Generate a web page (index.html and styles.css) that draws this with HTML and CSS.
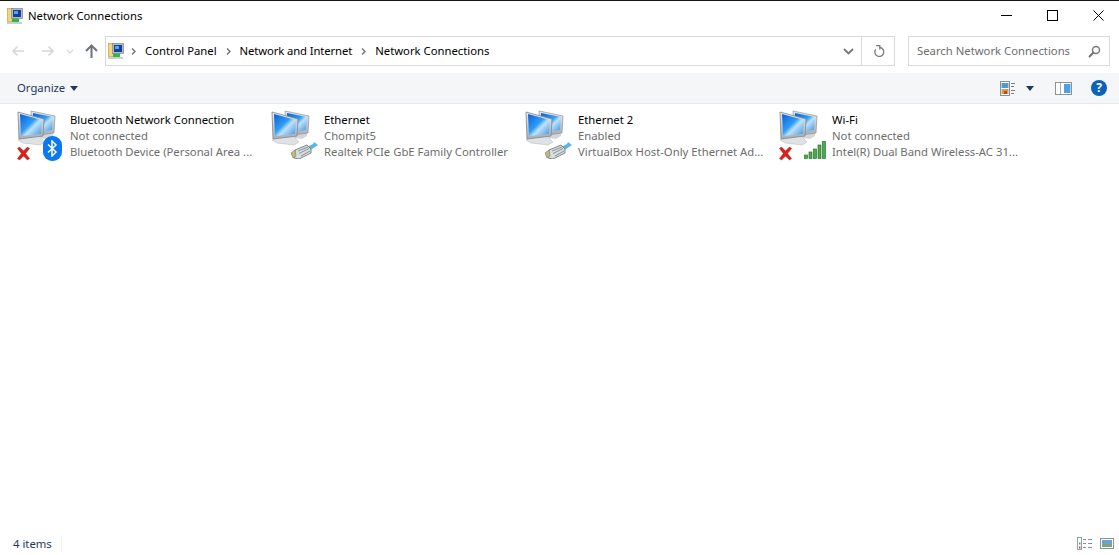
FILE: index.html
```html
<!DOCTYPE html>
<html lang="en">
<head>
<meta charset="utf-8">
<title>Network Connections</title>
<link rel="stylesheet" href="styles.css">
</head>
<body>
<svg class="defs" width="0" height="0" aria-hidden="true">
  <defs>
    <linearGradient id="scr" x1="0" y1="0" x2="1" y2="1">
      <stop offset="0" stop-color="#0b5fd8"/><stop offset=".45" stop-color="#2f9cf5"/><stop offset=".6" stop-color="#bfe2fb"/><stop offset="1" stop-color="#3a8fe0"/>
    </linearGradient>
    <linearGradient id="frm" x1="0" y1="0" x2="0" y2="1">
      <stop offset="0" stop-color="#e8eaec"/><stop offset="1" stop-color="#a9aeb3"/>
    </linearGradient>
    <symbol id="pc" viewBox="0 0 50 44">
      <path d="M34 25l9 1 0 4-5 3-9-1z" fill="#d3d6d9"/>
      <path d="M21 5l24 5-1 17-15 2-7-2z" fill="url(#frm)" stroke="#8d9398" stroke-width=".7"/>
      <path d="M23 7l20 4-1 13-13 2-6-2z" fill="url(#scr)"/>
      <path d="M11 27l19-2 1 7 4 4-5 3-17-2-5-3 5-3z" fill="#dfe2e4" stroke="#b3b7bb" stroke-width=".5"/>
      <path d="M8 6l26 7-1 17-24 3z" fill="url(#frm)" stroke="#7e858b" stroke-width=".8"/>
      <path d="M10 8l22 6-1 14-20 2z" fill="url(#scr)"/>
    </symbol>
    <symbol id="x" viewBox="0 0 15 15">
      <path d="M1.500 2.500L3.500 1l4 4 4-4 2 1.500-4 5 4 5-2 1.500-4-4-4 4-2-1.500 4-5z" fill="#d9211c" stroke="#a81612" stroke-width=".5"/>
    </symbol>
    <symbol id="small" viewBox="0 0 16 16">
      <rect x=".4" y=".4" width="6" height="13" fill="#f3d67c" stroke="#c4a44d" stroke-width=".7"/>
      <rect x="4.500" y=".5" width="11" height="10" fill="#b6bcc2" stroke="#80878d" stroke-width=".7"/>
      <rect x="6" y="2" width="8" height="7" fill="#12409c"/>
      <rect x="7" y="3" width="4" height="3" fill="#5ba2e8"/>
      <rect x="5" y="10.500" width="7" height="3.500" fill="#35b24b"/>
      <rect x="0" y="14" width="15" height="2" fill="#c9cdd0"/>
    </symbol>
    <symbol id="plug" viewBox="0 0 27 17">
      <path d="M16 5l6-3 1-2 4 3-3 2-6 4z" fill="#57b7ea"/>
      <path d="M4 8l12-5 4 4v4L8 17l-5-1z" fill="#d9dde0" stroke="#71787d" stroke-width=".9"/>
      <path d="M7 9l10-4M8 11.500l10-5M10 14l9-5" stroke="#8b9296" stroke-width="1" fill="none"/>
      <path d="M0 11l4-3 1 6-3 2z" fill="#c8b878" stroke="#71787d" stroke-width=".6"/>
    </symbol>
  </defs>
</svg>

<div class="topline"></div>

<header class="titlebar">
  <div class="title">
    <svg class="ico16"><use href="#small"/></svg>
    <span>Network Connections</span>
  </div>
  <div class="winctl">
    <span class="wbtn"><svg width="11" height="11"><path d="M0 5.500h11" stroke="#000"/></svg></span>
    <span class="wbtn"><svg width="11" height="11"><rect x=".5" y=".5" width="10" height="10" fill="none" stroke="#000"/></svg></span>
    <span class="wbtn"><svg width="11" height="11"><path d="M.5 .5l10 10M10.500 .5l-10 10" stroke="#000" fill="none"/></svg></span>
  </div>
</header>

<nav class="navrow">
  <div class="navbtns">
    <svg class="back" width="14" height="12"><path d="M13 6H2M6.500 1.500L2 6l4.500 4.500" fill="none" stroke="#d4d6d8" stroke-width="1.500"/></svg>
    <svg class="fwd" width="14" height="12"><path d="M1 6h11M7.500 1.500L12 6l-4.500 4.500" fill="none" stroke="#d4d6d8" stroke-width="1.500"/></svg>
    <svg class="drop" width="8" height="5"><path d="M1 1l3 3 3-3" fill="none" stroke="#d4d6d8" stroke-width="1.200"/></svg>
    <svg class="up" width="13" height="14"><path d="M6.500 14V2M1 7l5.500-5.500L12 7" fill="none" stroke="#6f7478" stroke-width="2"/></svg>
  </div>
  <div class="address">
    <svg class="ico16 addr-ico"><use href="#small"/></svg>
    <div class="crumbs">
      <svg class="chev" width="5" height="7"><path d="M1 .5L4 3.500 1 6.500" fill="none" stroke="#6d6d6d" stroke-width="1.300"/></svg>
      <span>Control Panel</span>
      <svg class="chev" width="5" height="7"><path d="M1 .5L4 3.500 1 6.500" fill="none" stroke="#6d6d6d" stroke-width="1.300"/></svg>
      <span class="tight">Network and Internet</span>
      <svg class="chev" width="5" height="7"><path d="M1 .5L4 3.500 1 6.500" fill="none" stroke="#6d6d6d" stroke-width="1.300"/></svg>
      <span>Network Connections</span>
    </div>
    <span class="addr-drop"><svg width="11" height="7"><path d="M1 1l4.500 4.500L10 1" fill="none" stroke="#74787c" stroke-width="1.800"/></svg></span>
    <span class="addr-refresh"><svg width="12" height="13" viewBox="0 0 12 13"><path d="M7 2.500A4.500 4.500 0 1 1 2.600 4.400" fill="none" stroke="#777b7f" stroke-width="1.300"/><path d="M3 .5h3.800v4" fill="none" stroke="#777b7f" stroke-width="1.300"/></svg></span>
  </div>
  <div class="search">
    <span>Search Network Connections</span>
    <svg width="13" height="13" viewBox="0 0 13 13"><circle cx="8" cy="5" r="3.500" fill="none" stroke="#7a7a7a" stroke-width="1.500"/><path d="M5.500 7.500L1 12" stroke="#6f6f6f" stroke-width="2"/></svg>
  </div>
</nav>

<div class="toolbar">
  <span class="organize">Organize<i class="caret"></i></span>
  <div class="tools">
    <svg class="viewicon" width="15" height="15" viewBox="0 0 15 15"><rect x=".5" y=".5" width="9" height="14" fill="#fff" stroke="#8b8f93"/><rect x="1.500" y="2" width="7" height="5" fill="#4e9bd4"/><rect x="1.500" y="8" width="7" height="5" fill="#c9a43e"/><rect x="4" y="10" width="3" height="3" fill="#c8402f"/><path d="M11 2.500h4M11 5.500h3M11 9.500h4M11 12.500h3" stroke="#7d8185"/></svg>
    <i class="caret tool-caret"></i>
    <svg class="pane" width="17" height="13"><rect x=".5" y=".5" width="16" height="12" fill="#fff" stroke="#8d9195"/><rect x="9" y="2" width="6.500" height="9" fill="#4e9fe3"/><path d="M5.500 1v11" stroke="#a9adb1"/></svg>
    <span class="help">?</span>
  </div>
</div>

<main class="items">
  <article class="item">
    <div class="iconbox">
      <svg class="pc"><use href="#pc"/></svg>
      <svg class="badge-x"><use href="#x"/></svg>
      <span class="badge-bt"><svg width="11" height="17" viewBox="0 0 11 17"><path d="M1 4.500l8 7.500-4 4V1l4 4-8 7.500" fill="none" stroke="#fff" stroke-width="1.500"/></svg></span>
    </div>
    <div class="text">
      <div class="name">Bluetooth Network Connection</div>
      <div class="sub">Not connected</div>
      <div class="sub">Bluetooth Device (Personal Area ...</div>
    </div>
  </article>
  <article class="item">
    <div class="iconbox">
      <svg class="pc"><use href="#pc"/></svg>
      <svg class="badge-plug"><use href="#plug"/></svg>
    </div>
    <div class="text">
      <div class="name">Ethernet</div>
      <div class="sub">Chompit5</div>
      <div class="sub">Realtek PCIe GbE Family Controller</div>
    </div>
  </article>
  <article class="item">
    <div class="iconbox">
      <svg class="pc"><use href="#pc"/></svg>
      <svg class="badge-plug"><use href="#plug"/></svg>
    </div>
    <div class="text">
      <div class="name">Ethernet 2</div>
      <div class="sub">Enabled</div>
      <div class="sub">VirtualBox Host-Only Ethernet Ad...</div>
    </div>
  </article>
  <article class="item">
    <div class="iconbox">
      <svg class="pc"><use href="#pc"/></svg>
      <svg class="badge-x"><use href="#x"/></svg>
      <svg class="badge-wifi" viewBox="0 0 22 18"><g fill="#4fa84f" stroke="#2c7a34" stroke-width=".7"><rect x=".5" y="14" width="3" height="3.500"/><rect x="5" y="11" width="3" height="6.500"/><rect x="9.500" y="8" width="3" height="9.500"/><rect x="14" y="4" width="3" height="13.500"/><rect x="18.500" y=".5" width="3" height="17"/></g></svg>
    </div>
    <div class="text">
      <div class="name">Wi-Fi</div>
      <div class="sub">Not connected</div>
      <div class="sub">Intel(R) Dual Band Wireless-AC 31...</div>
    </div>
  </article>
</main>

<footer class="status">
  <span class="count">4 items</span>
  <div class="viewsw">
    <svg width="16" height="13"><rect x=".5" y=".5" width="4" height="12" fill="#fff" stroke="#9a9ea2"/><path d="M6 2.500h3M11 2.500h4M6 6.500h3M11 6.500h4M6 10.500h3M11 10.500h4" stroke="#8a8e92"/><rect x="2" y="5.500" width="1.500" height="2" fill="#4e8fc8"/><rect x="2" y="9.500" width="1.500" height="2" fill="#c8402f"/></svg>
    <svg width="14" height="11"><rect x=".5" y=".5" width="13" height="10" fill="#fff" stroke="#8d9195"/><rect x="2" y="2" width="10" height="7" fill="#6aa5c7"/><rect x="2" y="6" width="10" height="3" fill="#7fa37a"/></svg>
  </div>
</footer>
</body>
</html>
```
FILE: styles.css
```css
* { box-sizing: border-box; }
html, body { margin: 0; padding: 0; }
body {
  width: 1119px;
  height: 555px;
  overflow: hidden;
  background: #fff;
  display: flex;
  flex-direction: column;
  font-family: "Noto Sans", "Open Sans", sans-serif;
  font-size: 11.3px;
  line-height: 16px;
  color: #000;
}
.defs { display: block; height: 0; width: 0; }
.topline { height: 1px; background: #151515; flex: none; }

.titlebar {
  height: 30px;
  flex: none;
  display: flex;
  justify-content: space-between;
  align-items: center;
}
.title { display: flex; align-items: center; gap: 5px; padding-left: 7px; }
.ico16 { width: 16px; height: 16px; flex: none; }
.winctl { display: flex; padding-right: 15px; gap: 35px; margin-top: -1px; }
.wbtn { display: block; width: 11px; height: 11px; }
.wbtn svg { display: block; }

.navrow {
  height: 42px;
  flex: none;
  display: flex;
  align-items: flex-start;
  padding-top: 5px;
}
.navbtns {
  width: 105px;
  height: 30px;
  flex: none;
  display: flex;
  align-items: center;
  padding-left: 11px;
}
.navbtns .fwd { margin-left: 16px; }
.navbtns .drop { margin-left: 11px; }
.navbtns .up { margin-left: 11px; }
.address {
  width: 790px;
  height: 30px;
  border: 1px solid #d9d9d9;
  display: flex;
  align-items: center;
  padding-left: 2px;
  flex: none;
}
.crumbs { flex: 1; display: flex; align-items: center; padding-left: 7px; white-space: nowrap; }
.chev { flex: none; margin-right: 9px; }
.crumbs span { margin-right: 9px; }
.crumbs .tight { letter-spacing: -.12px; }
.addr-drop {
  width: 27px;
  height: 100%;
  display: flex;
  align-items: center;
  justify-content: center;
  border-right: 1px solid #d9d9d9;
}
.addr-refresh { width: 32px; display: flex; justify-content: center; padding-left: 2px; }
.search {
  width: 202px;
  height: 30px;
  margin-left: 13px;
  border: 1px solid #d9d9d9;
  display: flex;
  align-items: center;
  justify-content: space-between;
  padding: 0 8px;
  color: #6d6d6d;
  white-space: nowrap;
}

.toolbar {
  height: 31px;
  flex: none;
  background: #f5f6f7;
  border-bottom: 1px solid #e8e9ea;
  display: flex;
  align-items: center;
  justify-content: space-between;
  padding: 0 12px 0 17px;
  color: #1e395b;
}
.organize { display: flex; align-items: center; }
.caret {
  display: block;
  width: 0;
  height: 0;
  margin-left: 5px;
  border-top: 5px solid #1e395b;
  border-left: 4.500px solid transparent;
  border-right: 4.500px solid transparent;
}
.tools { display: flex; align-items: center; }
.tool-caret { margin-left: 11px; }
.pane { margin-left: 21px; }
.help {
  width: 16px;
  height: 16px;
  margin-left: 19px;
  border-radius: 50%;
  background: #0b62b8;
  color: #fff;
  font-weight: 700;
  font-size: 12px;
  line-height: 16px;
  text-align: center;
}

.items { flex: 1; display: flex; align-items: flex-start; padding: 8px 0 0 12px; }
.item { width: 254px; height: 48px; display: flex; flex: none; }
.iconbox { width: 58px; height: 48px; position: relative; flex: none; }
.pc { display: block; width: 50px; height: 44px; margin: -6px 0 0 -2px; }
.badge-x { position: absolute; left: 4px; top: 34px; width: 15px; height: 15px; }
.badge-bt {
  position: absolute;
  left: 31px;
  top: 24px;
  width: 19px;
  height: 25px;
  border-radius: 9px;
  background: #0a78ee;
  display: flex;
  align-items: center;
  justify-content: center;
}
.badge-bt svg { display: block; }
.badge-plug { position: absolute; left: 25px; top: 30px; width: 27px; height: 17px; }
.badge-wifi { position: absolute; left: 30px; top: 29px; width: 22px; height: 18px; }
.text { white-space: nowrap; min-width: 0; }
.name { color: #000; height: 16px; }
.sub { color: #6d6d6d; height: 16px; }

.status {
  height: 23px;
  flex: none;
  display: flex;
  justify-content: space-between;
  align-items: center;
  padding: 0 5px 0 13px;
  color: #1e395b;
}
.count { border-right: 1px solid #eceff2; width: 49px; }
.viewsw { display: flex; align-items: center; gap: 7px; }
.viewsw svg { display: block; }
```
